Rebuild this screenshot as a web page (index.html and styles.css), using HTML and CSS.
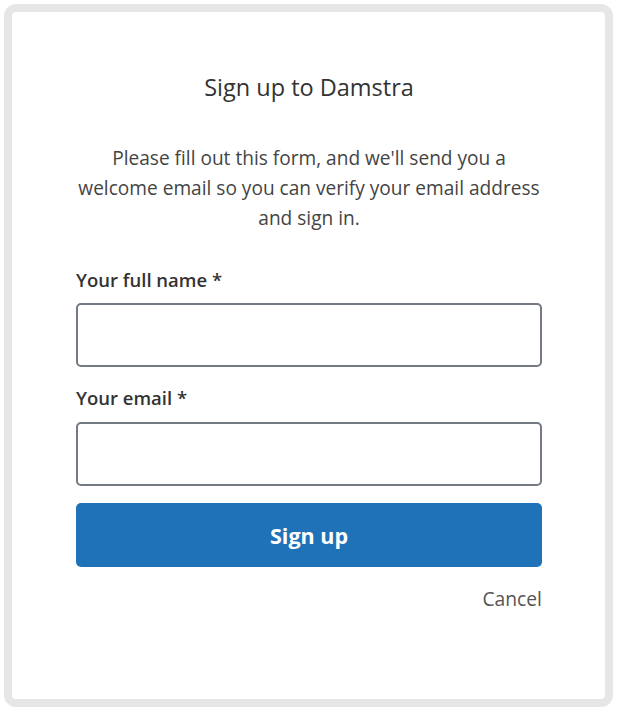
FILE: index.html
```html
<!DOCTYPE html>
<html lang="en">
<head>
<meta charset="utf-8">
<title>Sign up to Damstra</title>
<link rel="stylesheet" href="styles.css">
</head>
<body>
<div class="card">
  <form class="form">
    <h1 class="title">Sign up to Damstra</h1>
    <p class="intro">Please fill out this form, and we'll send you a<br>welcome email so you can verify your email address<br>and sign in.</p>
    <label class="label" for="name">Your full name *</label>
    <input class="input" id="name" type="text">
    <label class="label label-2" for="email">Your email *</label>
    <input class="input input-2" id="email" type="email">
    <button class="btn" type="button">Sign up</button>
    <div class="cancel-row"><a class="cancel" href="#">Cancel</a></div>
  </form>
</div>
</body>
</html>
```
FILE: styles.css
```css
* { box-sizing: border-box; }
html, body { margin: 0; padding: 0; background: #fff; }
body {
  font-family: "Open Sans", "Noto Sans", sans-serif;
  color: #333;
}
.card {
  margin: 4px;
  width: 609px;
  height: 703px;
  border: 8px solid #e6e6e6;
  border-radius: 12px;
  display: flex;
  justify-content: center;
}
.form {
  width: 466px;
  margin-left: 1px;
  display: flex;
  flex-direction: column;
  padding-top: 60px;
}
.title {
  margin: 0;
  font-size: 23.5px;
  font-weight: 400;
  line-height: 30px;
  text-align: center;
  color: #333;
}
.intro {
  margin: 41px 0 0;
  font-size: 19.1px;
  line-height: 30px;
  text-align: center;
  color: #444;
  white-space: nowrap;
}
.label {
  margin-top: 35px;
  font-size: 18.5px;
  font-weight: 600;
  line-height: 24px;
  color: #333;
}
.label-2 { margin-top: 19px; }
.input {
  margin-top: 11px;
  height: 64px;
  width: 100%;
  border: 2px solid #747a82;
  border-radius: 5px;
  background: #fff;
  font: inherit;
}
.input-2 { margin-top: 12px; }
.btn {
  margin-top: 17px;
  height: 64px;
  width: 100%;
  border: 0;
  border-radius: 5px;
  background: #1f72b8;
  color: #fff;
  font-family: inherit;
  font-size: 21.5px;
  font-weight: 700;
}
.cancel-row {
  display: flex;
  justify-content: flex-end;
  margin-top: 20px;
}
.cancel {
  font-size: 19.3px;
  line-height: 24px;
  color: #555;
  text-decoration: none;
}
```
